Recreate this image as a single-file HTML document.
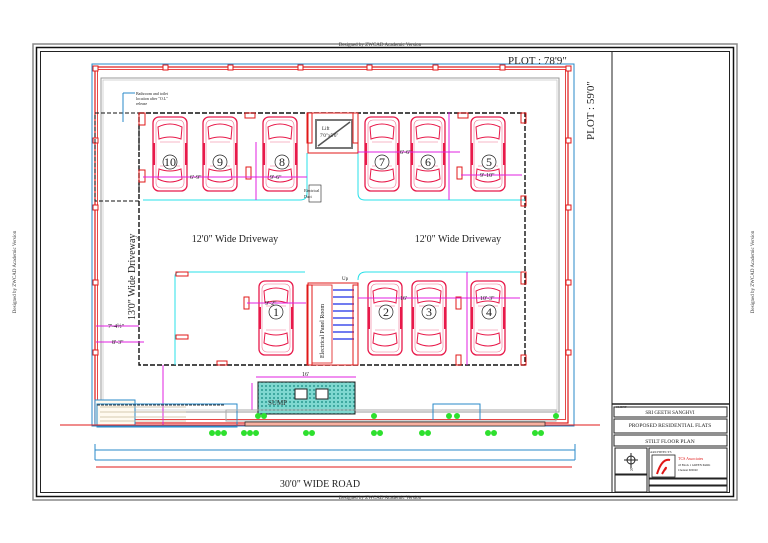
<!DOCTYPE html>
<html><head><meta charset="utf-8"><style>
html,body{margin:0;padding:0;background:#fff;width:768px;height:543px;overflow:hidden}
svg{display:block}
text{font-family:"Liberation Serif",serif}
</style></head><body>
<svg width="768" height="543" viewBox="0 0 768 543" xmlns="http://www.w3.org/2000/svg">
<defs>
<g id="car">
  <rect x="-17" y="0" width="34" height="74" rx="6" fill="none" stroke="#e8194a" stroke-width="1.3"/>
  <rect x="-14" y="3" width="28" height="68" rx="5" fill="none" stroke="#f07090" stroke-width="0.6"/>
  <path d="M-12 10 Q0 4 12 10 L11 22 Q0 18 -11 22 Z" fill="none" stroke="#e8194a" stroke-width="1"/>
  <path d="M-12 62 Q0 68 12 62 L11 52 Q0 56 -11 52 Z" fill="none" stroke="#e8194a" stroke-width="1"/>
  <line x1="-16" y1="26" x2="-16" y2="48" stroke="#e8194a" stroke-width="2"/>
  <line x1="16" y1="26" x2="16" y2="48" stroke="#e8194a" stroke-width="2"/>
  <line x1="-10" y1="25" x2="10" y2="25" stroke="#f07090" stroke-width="0.6"/>
  <line x1="-10" y1="49" x2="10" y2="49" stroke="#f07090" stroke-width="0.6"/>
</g>
<pattern id="hatch" width="4" height="4" patternUnits="userSpaceOnUse">
  <rect width="4" height="4" fill="#7fd8d0"/><circle cx="2" cy="2" r="1" fill="#2a9a90"/>
</pattern>
</defs>

<rect x="33" y="44" width="704" height="456" fill="none" stroke="#888" stroke-width="1.5"/>
<rect x="36.5" y="47.5" width="697" height="449" fill="none" stroke="#111" stroke-width="1.5"/>
<rect x="40.5" y="51.5" width="689" height="441" fill="none" stroke="#222" stroke-width="1"/>
<line x1="612" y1="52" x2="612" y2="492" stroke="#222" stroke-width="1"/>
<text x="380" y="46" font-size="5" text-anchor="middle" fill="#333">Designed by ZWCAD Academic Version</text>
<text x="380" y="499" font-size="5" text-anchor="middle" fill="#333">Designed by ZWCAD Academic Version</text>
<text transform="translate(16,272) rotate(-90)" font-size="5" text-anchor="middle" fill="#333">Designed by ZWCAD Academic Version</text>
<text transform="translate(754,272) rotate(-90)" font-size="5" text-anchor="middle" fill="#333">Designed by ZWCAD Academic Version</text>

<rect x="92" y="64" width="482" height="362" fill="none" stroke="#2a8ac8" stroke-width="1"/>
<rect x="95" y="67" width="473" height="356" fill="none" stroke="#e01818" stroke-width="1.2"/>
<rect x="97.5" y="69.5" width="468" height="350" fill="none" stroke="#e01818" stroke-width="0.8"/>
<rect x="101" y="78" width="458" height="334" fill="none" stroke="#999" stroke-width="1"/>
<rect x="103" y="80" width="454" height="330" fill="none" stroke="#bbb" stroke-width="0.6"/>
<g fill="#fff" stroke="#e01818" stroke-width="1">
<rect x="163" y="65" width="5" height="5"/><rect x="228" y="65" width="5" height="5"/><rect x="298" y="65" width="5" height="5"/><rect x="367" y="65" width="5" height="5"/><rect x="433" y="65" width="5" height="5"/><rect x="500" y="65" width="5" height="5"/><rect x="566" y="66" width="5" height="5"/>
<rect x="93" y="66" width="5" height="5"/><rect x="93" y="138" width="5" height="5"/><rect x="93" y="205" width="5" height="5"/><rect x="93" y="280" width="5" height="5"/><rect x="93" y="350" width="5" height="5"/>
<rect x="566" y="138" width="5" height="5"/><rect x="566" y="205" width="5" height="5"/><rect x="566" y="280" width="5" height="5"/><rect x="566" y="350" width="5" height="5"/>
</g>
<text x="508" y="64" font-size="11" fill="#222">PLOT : 78'9"</text>
<text transform="translate(594,140) rotate(-90)" font-size="11" fill="#222">PLOT : 59'0"</text>

<rect x="139" y="113" width="386" height="252" fill="none" stroke="#111" stroke-width="1.4" stroke-dasharray="5,2"/>
<rect x="95" y="113" width="44" height="88" fill="none" stroke="#111" stroke-width="1" stroke-dasharray="4,2"/>
<line x1="123" y1="93" x2="123" y2="122" stroke="#2a8ac8" stroke-width="1"/>
<line x1="123" y1="93" x2="135" y2="93" stroke="#2a8ac8" stroke-width="1"/>
<text x="136" y="95" font-size="4" fill="#222">Bathroom and toilet</text>
<text x="136" y="100" font-size="4" fill="#222">location after "O.L"</text>
<text x="136" y="105" font-size="4" fill="#222">release</text>

<path d="M143 200 L300 200 Q307 200 307 193 L307 153" fill="none" stroke="#28e0e8" stroke-width="1"/>
<path d="M358 153 L358 193 Q358 200 365 200 L525 200" fill="none" stroke="#28e0e8" stroke-width="1"/>
<path d="M175 365 L175 276 Q175 272 180 272 L305 272" fill="none" stroke="#28e0e8" stroke-width="1"/>
<path d="M358 280 Q358 272 366 272 L525 272" fill="none" stroke="#28e0e8" stroke-width="1"/>

<use href="#car" x="170" y="117"/><use href="#car" x="220" y="117"/><use href="#car" x="280" y="117"/>
<use href="#car" x="382" y="117"/><use href="#car" x="428" y="117"/><use href="#car" x="488" y="117"/>
<use href="#car" x="276" y="281"/><use href="#car" x="385" y="281"/><use href="#car" x="429" y="281"/><use href="#car" x="488" y="281"/>
<g font-size="12" text-anchor="middle" fill="#222">
<circle cx="170" cy="162" r="7" fill="#fff" stroke="#222" stroke-width="0.7"/><text x="170" y="166">10</text>
<circle cx="220" cy="162" r="7" fill="#fff" stroke="#222" stroke-width="0.7"/><text x="220" y="166">9</text>
<circle cx="282" cy="162" r="7" fill="#fff" stroke="#222" stroke-width="0.7"/><text x="282" y="166">8</text>
<circle cx="382" cy="162" r="7" fill="#fff" stroke="#222" stroke-width="0.7"/><text x="382" y="166">7</text>
<circle cx="428" cy="162" r="7" fill="#fff" stroke="#222" stroke-width="0.7"/><text x="428" y="166">6</text>
<circle cx="489" cy="162" r="7" fill="#fff" stroke="#222" stroke-width="0.7"/><text x="489" y="166">5</text>
<circle cx="276" cy="312" r="7" fill="#fff" stroke="#222" stroke-width="0.7"/><text x="276" y="316">1</text>
<circle cx="386" cy="312" r="7" fill="#fff" stroke="#222" stroke-width="0.7"/><text x="386" y="316">2</text>
<circle cx="429" cy="312" r="7" fill="#fff" stroke="#222" stroke-width="0.7"/><text x="429" y="316">3</text>
<circle cx="489" cy="312" r="7" fill="#fff" stroke="#222" stroke-width="0.7"/><text x="489" y="316">4</text>
</g>

<rect x="308" y="113" width="50" height="40" fill="#fff" stroke="#e01818" stroke-width="1"/>
<rect x="316" y="120" width="36" height="28" fill="#fff" stroke="#777" stroke-width="2"/>
<path d="M318 146 L350 122" stroke="#555" stroke-width="1.5"/>
<text x="322" y="130" font-size="5" fill="#222">Lift</text>
<text x="320" y="137" font-size="5" fill="#222">7'0"x5'6"</text>

<rect x="308" y="283" width="50" height="82" fill="#fff" stroke="#e01818" stroke-width="1"/>
<rect x="312" y="285" width="20" height="78" fill="none" stroke="#e01818" stroke-width="0.8"/>
<g stroke="#1c2ee8" stroke-width="1.2">
<line x1="333" y1="290" x2="354" y2="290"/><line x1="333" y1="297" x2="354" y2="297"/><line x1="333" y1="304" x2="354" y2="304"/><line x1="333" y1="311" x2="354" y2="311"/><line x1="333" y1="318" x2="354" y2="318"/><line x1="333" y1="325" x2="354" y2="325"/><line x1="333" y1="332" x2="354" y2="332"/><line x1="333" y1="339" x2="354" y2="339"/>
</g>
<text transform="translate(324,358) rotate(-90)" font-size="6" fill="#222">Electrical Panel Room</text>
<text x="342" y="280" font-size="5" fill="#222">Up</text>

<g fill="none" stroke="#e01818" stroke-width="1">
<rect x="139" y="113" width="6" height="12"/><rect x="139" y="170" width="6" height="12"/>
<rect x="246" y="167" width="5" height="12"/><rect x="245" y="113" width="10" height="5"/>
<rect x="307" y="113" width="5" height="30"/><rect x="353" y="113" width="5" height="30"/>
<rect x="457" y="167" width="5" height="12"/><rect x="458" y="113" width="10" height="5"/>
<rect x="521" y="113" width="5" height="10"/><rect x="521" y="196" width="5" height="10"/>
<rect x="176" y="272" width="12" height="4"/><rect x="176" y="335" width="12" height="4"/>
<rect x="244" y="297" width="5" height="12"/><rect x="217" y="361" width="10" height="4"/>
<rect x="307" y="285" width="5" height="80"/><rect x="353" y="285" width="5" height="80"/>
<rect x="456" y="297" width="5" height="12"/><rect x="456" y="355" width="5" height="10"/>
<rect x="521" y="272" width="5" height="12"/><rect x="521" y="355" width="5" height="10"/>
</g>

<g stroke="#e020e0" stroke-width="1" fill="none">
<line x1="143" y1="177" x2="307" y2="177"/><line x1="256" y1="142" x2="256" y2="200"/>
<line x1="358" y1="152" x2="460" y2="152"/><line x1="449" y1="112" x2="449" y2="200"/>
<line x1="461" y1="175" x2="522" y2="175"/>
<line x1="247" y1="303" x2="306" y2="303"/><line x1="358" y1="298" x2="520" y2="298"/>
<line x1="467" y1="272" x2="467" y2="365"/>
<line x1="96" y1="326" x2="139" y2="326"/><line x1="96" y1="342" x2="144" y2="342"/>
<line x1="163" y1="365" x2="163" y2="425"/>
<line x1="256" y1="377" x2="356" y2="377"/><line x1="252" y1="383" x2="252" y2="410"/>
</g>
<g font-size="6" fill="#222">
<text x="190" y="179">6'-9"</text><text x="270" y="179">9'-6"</text><text x="400" y="154">6'-6"</text><text x="480" y="177">9'-10"</text>
<text x="265" y="305">9'-2"</text><text x="400" y="300">16'</text><text x="480" y="300">10'-3"</text><text x="302" y="376">16'</text>
<text x="108" y="328">7'-4½"</text><text x="112" y="344">8'-3"</text>
</g>

<text x="235" y="242" font-size="10" text-anchor="middle" fill="#222">12'0" Wide Driveway</text>
<text x="458" y="242" font-size="10" text-anchor="middle" fill="#222">12'0" Wide Driveway</text>
<text transform="translate(135,320) rotate(-90)" font-size="10" fill="#222">13'0" Wide Driveway</text>
<rect x="309" y="185" width="12" height="17" fill="#fff" stroke="#222" stroke-width="0.6"/>
<text x="304" y="192" font-size="4" fill="#222">Electrical</text><text x="304" y="198" font-size="4" fill="#222">Duct</text>

<rect x="258" y="382" width="97" height="32" fill="url(#hatch)" stroke="#222" stroke-width="1"/>
<rect x="295" y="389" width="12" height="10" fill="#fff" stroke="#222"/><rect x="316" y="389" width="12" height="10" fill="#fff" stroke="#222"/>
<text x="268" y="405" font-size="7" fill="#333">SUMP</text>

<rect x="95" y="400" width="40" height="25" fill="#fffaf0" stroke="#2a8ac8" stroke-width="1"/>
<g stroke="#c8b89a" stroke-width="0.8"><line x1="100" y1="407" x2="186" y2="407"/><line x1="100" y1="412" x2="186" y2="412"/><line x1="100" y1="417" x2="186" y2="417"/><line x1="100" y1="421" x2="186" y2="421"/></g>
<rect x="97" y="404" width="140" height="23" fill="none" stroke="#2a8ac8" stroke-width="1"/>
<line x1="97" y1="405" x2="225" y2="405" stroke="#333" stroke-width="1" stroke-dasharray="3,1"/>
<rect x="226" y="410" width="330" height="11" fill="none" stroke="#aaa" stroke-width="1"/>
<line x1="60" y1="425" x2="600" y2="425" stroke="#e01818" stroke-width="1"/>
<rect x="245" y="422" width="300" height="4" fill="#f8b0a0" stroke="#222" stroke-width="0.7"/>
<g fill="#2ee02e">
<circle cx="212" cy="433" r="3"/><circle cx="218" cy="433" r="3"/><circle cx="224" cy="433" r="3"/>
<circle cx="244" cy="433" r="3"/><circle cx="250" cy="433" r="3"/><circle cx="256" cy="433" r="3"/>
<circle cx="258" cy="416" r="3"/><circle cx="264" cy="416" r="3"/>
<circle cx="306" cy="433" r="3"/><circle cx="312" cy="433" r="3"/>
<circle cx="374" cy="416" r="3"/><circle cx="374" cy="433" r="3"/><circle cx="380" cy="433" r="3"/>
<circle cx="422" cy="433" r="3"/><circle cx="428" cy="433" r="3"/>
<circle cx="449" cy="416" r="3"/><circle cx="457" cy="416" r="3"/>
<circle cx="488" cy="433" r="3"/><circle cx="494" cy="433" r="3"/><circle cx="535" cy="433" r="3"/><circle cx="541" cy="433" r="3"/>
<circle cx="556" cy="416" r="3"/>
</g>
<path d="M433 420 L433 404 L480 404 L480 420" fill="none" stroke="#2a8ac8" stroke-width="1"/>
<g stroke="#2a8ac8" stroke-width="1" fill="none">
<line x1="95" y1="450" x2="575" y2="450"/><line x1="95" y1="460" x2="575" y2="460"/>
<line x1="95" y1="444" x2="95" y2="460"/><line x1="575" y1="444" x2="575" y2="460"/>
</g>
<line x1="96" y1="467" x2="572" y2="467" stroke="#e01818" stroke-width="1"/>
<text x="320" y="487" font-size="10" text-anchor="middle" fill="#222">30'0"    WIDE   ROAD</text>

<g stroke="#222" fill="none" stroke-width="1">
<line x1="612" y1="404" x2="729" y2="404" stroke-width="1.5"/>
<rect x="614" y="407" width="113" height="10"/><rect x="614" y="419" width="113" height="14"/><rect x="614" y="435" width="113" height="11"/>
<rect x="615" y="448" width="32" height="26"/><rect x="615" y="475" width="32" height="17"/>
<rect x="649" y="448" width="78" height="30"/><rect x="649" y="479" width="78" height="6"/><rect x="649" y="486" width="78" height="6"/>
</g>
<g font-size="5" fill="#222" text-anchor="middle">
<text x="670" y="414">SRI GEETH SANGHVI</text>
<text x="670" y="427" font-size="5.5">PROPOSED RESIDENTIAL FLATS</text>
<text x="670" y="443" font-size="5.5">STILT FLOOR PLAN</text>
</g>
<text x="616" y="408" font-size="3" fill="#222">CLIENT</text>
<text x="650" y="453" font-size="3.5" fill="#222">ARCHITECTS</text>
<rect x="652" y="455" width="23" height="22" fill="#fff" stroke="#222" stroke-width="0.8"/>
<path d="M657 474 Q662 458 670 460 M662 474 Q668 464 665 470" stroke="#e01818" stroke-width="2" fill="none"/>
<text x="678" y="460" font-size="4" fill="#e01818">TCS Associates</text>
<text x="678" y="466" font-size="3" fill="#222">43 Block 1 GREEN PARK</text>
<text x="678" y="471" font-size="3" fill="#222">Chennai 600040</text>
<circle cx="631" cy="460" r="4" fill="none" stroke="#222"/><line x1="631" y1="453" x2="631" y2="468" stroke="#222"/><line x1="624" y1="460" x2="638" y2="460" stroke="#222"/>
<text x="630" y="471" font-size="4" fill="#222">N</text>
</svg>
</body></html>
